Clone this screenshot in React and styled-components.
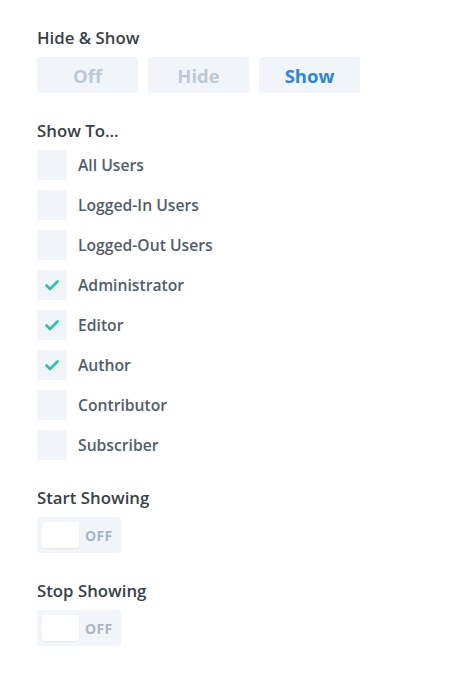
import React, { Component } from 'react'
import styled, { createGlobalStyle } from 'styled-components'

const GlobalStyle = createGlobalStyle`
    body {
        margin: 0;
        background: #ffffff;
        font-family: "Open Sans", "Liberation Sans", sans-serif;
    }
`

const Page = styled.div`
    display: flex;
    flex-direction: column;
    gap: 27px;
    padding: 27px 37px;
`

const Section = styled.div`
    display: flex;
    flex-direction: column;
`

const Heading = styled.h3`
    margin: 0 0 8px;
    font-size: 16.8px;
    line-height: 22px;
    font-weight: 600;
    color: #3a3f45;
`

const ButtonRow = styled.div`
    display: flex;
    gap: 10px;
`

const Choice = styled.button`
    width: 101px;
    height: 36px;
    border: 0;
    border-radius: 3px;
    background: #f1f5f9;
    font-family: inherit;
    font-size: 18.5px;
    font-weight: 700;
    color: ${props => (props.active ? '#2b87da' : '#bec9d5')};
    cursor: pointer;
`

const List = styled.div`
    display: flex;
    flex-direction: column;
    gap: 10px;
`

const Row = styled.label`
    display: flex;
    align-items: center;
    gap: 11px;
    height: 30px;
    font-size: 15.7px;
    font-weight: 600;
    color: #525d6b;
    cursor: pointer;
`

const Box = styled.span`
    display: flex;
    align-items: center;
    justify-content: center;
    width: 30px;
    height: 30px;
    border-radius: 3px;
    background: #f1f5f9;
`

const Toggle = styled.div`
    display: flex;
    align-items: center;
    gap: 6px;
    width: 84px;
    height: 36px;
    padding: 0 5px;
    box-sizing: border-box;
    border-radius: 3px;
    background: #f1f5f9;
`

const Knob = styled.span`
    width: 37px;
    height: 26px;
    border-radius: 3px;
    background: #ffffff;
    box-shadow: 0 1px 2px rgba(0, 0, 0, 0.06);
`

const ToggleText = styled.span`
    font-size: 14px;
    font-weight: 700;
    letter-spacing: 0.3px;
    color: #a8b5c4;
`

const Check = () => (
    <svg width="14" height="11" viewBox="0 0 14 11">
        <path
            d="M1.5 5.5 L5.2 9 L12.5 1.5"
            fill="none"
            stroke="#29c4a9"
            strokeWidth="2.6"
            strokeLinecap="round"
            strokeLinejoin="round"
        />
    </svg>
)

const roles = [
    { name: 'All Users', checked: false },
    { name: 'Logged-In Users', checked: false },
    { name: 'Logged-Out Users', checked: false },
    { name: 'Administrator', checked: true },
    { name: 'Editor', checked: true },
    { name: 'Author', checked: true },
    { name: 'Contributor', checked: false },
    { name: 'Subscriber', checked: false },
]

class App extends Component {
    constructor(props) {
        super(props)

        this.state = {
            mode: 'Show',
            roles,
        }
    }

    handleToggleRole = index => {
        const roles = this.state.roles.map((role, i) =>
            i === index ? { ...role, checked: !role.checked } : role
        )
        this.setState({ roles })
    }

    render() {
        const { mode, roles } = this.state
        return (
            <Page>
                <GlobalStyle />
                <Section>
                    <Heading>Hide &amp; Show</Heading>
                    <ButtonRow>
                        {['Off', 'Hide', 'Show'].map(item => (
                            <Choice
                                key={item}
                                active={item === mode}
                                onClick={() => this.setState({ mode: item })}
                            >
                                {item}
                            </Choice>
                        ))}
                    </ButtonRow>
                </Section>

                <Section>
                    <Heading>Show To...</Heading>
                    <List>
                        {roles.map((role, i) => (
                            <Row key={role.name} onClick={() => this.handleToggleRole(i)}>
                                <Box>{role.checked && <Check />}</Box>
                                {role.name}
                            </Row>
                        ))}
                    </List>
                </Section>

                <Section>
                    <Heading>Start Showing</Heading>
                    <Toggle>
                        <Knob />
                        <ToggleText>OFF</ToggleText>
                    </Toggle>
                </Section>

                <Section>
                    <Heading>Stop Showing</Heading>
                    <Toggle>
                        <Knob />
                        <ToggleText>OFF</ToggleText>
                    </Toggle>
                </Section>
            </Page>
        )
    }
}

export default App
